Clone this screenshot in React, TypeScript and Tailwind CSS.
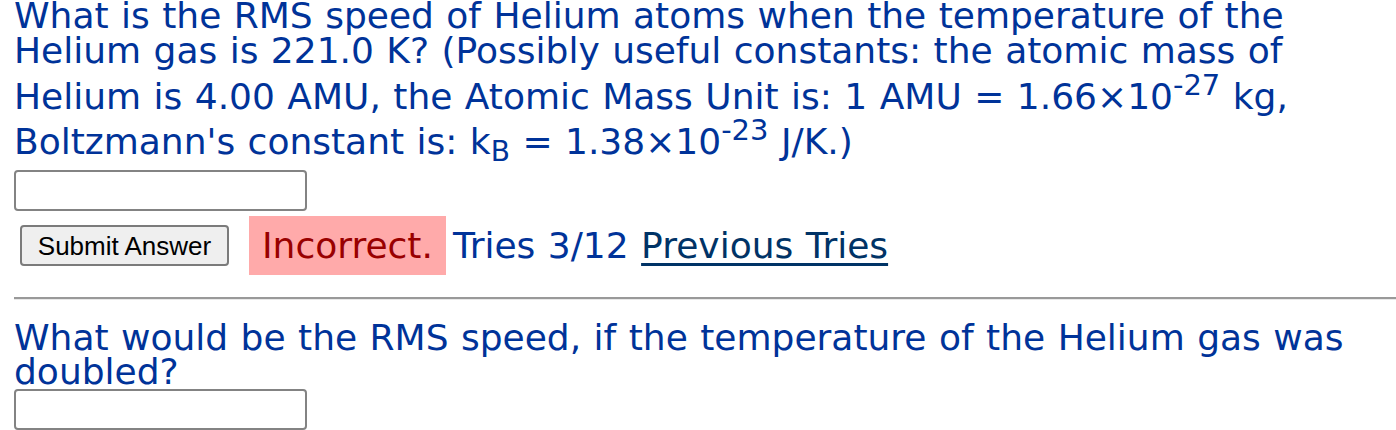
export default function App() {
  return (
    <div className="min-h-screen bg-white text-[#003399] font-['DejaVu_Sans',Verdana,sans-serif] text-[36px] [word-spacing:1px] pl-[14px] -mt-[2px] overflow-hidden">
      <div className="whitespace-nowrap">
        <div className="leading-[35px]">What is the RMS speed of Helium atoms when the temperature of the</div>
        <div className="leading-[35px]">Helium gas is 221.0 K? (Possibly useful constants: the atomic mass of</div>
        <div className="leading-[35px] pt-[11px]">
          Helium is 4.00 AMU, the Atomic Mass Unit is: 1 AMU = 1.66×10<sup className="text-[29px]">-27</sup> kg,
        </div>
        <div className="leading-[35px] pt-[10px]">
          Boltzmann's constant is: k<sub className="text-[28px]">B</sub> = 1.38×10<sup className="text-[29px]">-23</sup> J/K.)
        </div>
      </div>

      <input
        type="text"
        className="block mt-[11px] w-[293px] h-[41px] border-2 border-[#838383] rounded-[4px] bg-white outline-none"
      />

      <div className="flex items-center mt-[5px] h-[59px] whitespace-nowrap">
        <button className="ml-[6px] w-[209px] h-[41px] bg-[#efefef] border-2 border-[#7b7b7b] rounded-[4px] text-black text-[26px] [word-spacing:0px] font-['Liberation_Sans',Arial,sans-serif]">
          Submit Answer
        </button>
        <span className="ml-[20px] bg-[#ffaaaa] text-[#990000] leading-[35px] py-[12px] px-[13px]">Incorrect.</span>
        <span className="ml-[7px] leading-[35px]">
          Tries 3/12{" "}
          <a href="#" className="text-[#003366] underline decoration-[3px] underline-offset-[5px]">
            Previous Tries
          </a>
        </span>
      </div>

      <div className="mt-[22px] border-t-2 border-b border-t-[#999999] border-b-[#e8e8e8]" />

      <div className="mt-[21px] leading-[34px] whitespace-nowrap">
        <div>What would be the RMS speed, if the temperature of the Helium gas was</div>
        <div>doubled?</div>
      </div>

      <input
        type="text"
        className="block w-[293px] h-[41px] border-2 border-[#838383] rounded-[4px] bg-white outline-none"
      />
    </div>
  )
}
